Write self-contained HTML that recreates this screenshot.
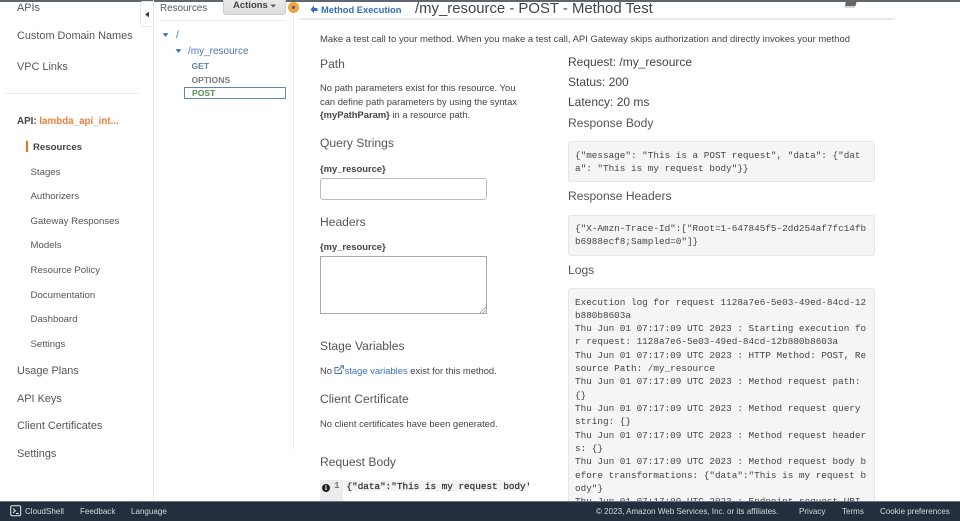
<!DOCTYPE html>
<html><head><meta charset="utf-8">
<style>
html,body{margin:0;padding:0;background:#fff}
body{width:960px;height:521px;overflow:hidden;position:relative;font-family:"Liberation Sans",sans-serif;color:#444}
.w{position:absolute;left:0;top:0;width:960px;height:521px;overflow:hidden;filter:blur(.35px)}
.t{position:absolute;white-space:nowrap;line-height:14px}
.n{font-size:10.9px;color:#555}
.m{font-size:9.65px;color:#555;left:30.5px}
.h{font-size:12.1px;color:#555;left:320px}
.p{font-size:9.4px;color:#444;left:320px}
.b{position:absolute;background:#e9e9e9}
.pre{position:absolute;left:568px;width:307px;background:#f5f5f5;border:1px solid #e6e6e6;border-radius:3px;box-sizing:border-box}
.mono{position:absolute;left:575px;font:9.33px/13.33px "Liberation Mono",monospace;color:#444;white-space:pre}
.f{position:absolute;font-size:8.05px;color:#d5dbdb;white-space:nowrap;line-height:12px;top:505.5px}
</style></head><body>
<div class="w">
<div style="position:absolute;left:0;top:0;width:960px;height:1.5px;background:#5f6670"></div>

<div class="t n" style="left:17px;top:1px">APIs</div>
<div class="t n" style="left:17px;top:28.5px">Custom Domain Names</div>
<div class="t n" style="left:17px;top:59.5px">VPC Links</div>
<div class="b" style="left:5px;top:92.5px;width:134px;height:1.5px"></div>
<div class="t" style="left:17px;top:114.5px;font-size:9.8px;font-weight:bold;color:#444">API: <span style="color:#e9823a">lambda_api_int...</span></div>
<div style="position:absolute;left:25.5px;top:141px;width:2px;height:11px;background:#ec7211"></div>
<div class="t" style="left:33px;top:140.5px;font-size:9.6px;font-weight:bold;color:#444">Resources</div>
<div class="t m" style="top:165.5px">Stages</div>
<div class="t m" style="top:190px">Authorizers</div>
<div class="t m" style="top:214.5px">Gateway Responses</div>
<div class="t m" style="top:239px">Models</div>
<div class="t m" style="top:263.5px">Resource Policy</div>
<div class="t m" style="top:288.5px">Documentation</div>
<div class="t m" style="top:313px">Dashboard</div>
<div class="t m" style="top:337.5px">Settings</div>
<div class="t n" style="left:17px;top:364px">Usage Plans</div>
<div class="t n" style="left:17px;top:391.5px">API Keys</div>
<div class="t n" style="left:17px;top:419px">Client Certificates</div>
<div class="t n" style="left:17px;top:447px">Settings</div>

<div class="b" style="left:152.5px;top:0;width:1.5px;height:501px"></div>
<div style="position:absolute;left:140px;top:1px;width:13px;height:26px;background:#fff;border:1px solid #e6e6e6;border-right:0;border-radius:3px 0 0 3px;box-sizing:border-box"></div>
<svg style="position:absolute;left:144px;top:11px" width="6" height="7"><path d="M1 3.5L5 .5V6.5Z" fill="#444"/></svg>
<div class="t" style="left:160px;top:1.5px;font-size:9.9px;color:#555">Resources</div>
<div style="position:absolute;left:223px;top:-6px;width:63px;height:21px;background:linear-gradient(#eee,#ddd);border:1px solid #ccc;border-radius:3px;box-sizing:border-box"></div>
<div class="t" style="left:233px;top:-1.5px;font-size:9.5px;font-weight:bold;color:#444">Actions</div>
<svg style="position:absolute;left:270px;top:4px" width="7" height="4"><path d="M.5 .5H6L3.2 3.5Z" fill="#555"/></svg>
<div class="b" style="left:160px;top:20px;width:126px;height:1px"></div>
<div class="b" style="left:292.5px;top:12px;width:1.5px;height:437px"></div>
<div style="position:absolute;left:287.5px;top:1.5px;width:11px;height:11px;border-radius:50%;background:#f2a33a"></div>
<div style="position:absolute;left:291.5px;top:5.5px;width:3.5px;height:3.5px;border-radius:50%;background:#2f5fa8"></div>

<svg style="position:absolute;left:162px;top:33px" width="7" height="4"><path d="M.5 .3H6.5L3.5 3.7Z" fill="#2f6fb5"/></svg>
<div class="t" style="left:176px;top:28.5px;font-size:10px;color:#4a76ad">/</div>
<svg style="position:absolute;left:175px;top:49px" width="7" height="4"><path d="M.5 .3H6.5L3.5 3.7Z" fill="#2f6fb5"/></svg>
<div class="t" style="left:188px;top:44.5px;font-size:10px;color:#4a76ad">/my_resource</div>
<div class="t" style="left:191.5px;top:58.5px;font-size:8.6px;font-weight:bold;color:#5a83b8">GET</div>
<div class="t" style="left:191.5px;top:72.5px;font-size:8.6px;font-weight:bold;color:#7b7b7b">OPTIONS</div>
<div style="position:absolute;left:184px;top:87px;width:102px;height:12px;border:1.5px solid #5d86b0;box-sizing:border-box"></div>
<div class="t" style="left:192px;top:86px;font-size:8.6px;font-weight:bold;color:#4f9056">POST</div>

<svg style="position:absolute;left:310px;top:5px" width="8" height="9"><path d="M4 .5L.5 4.5 4 8.5V6H7.5V3H4Z" fill="#2f6fb5"/></svg>
<div class="t" style="left:321px;top:2.5px;font-size:9.35px;font-weight:bold;color:#2f6fb5">Method Execution</div>
<div class="t" style="left:415px;top:2px;font-size:14.9px;color:#444">/my_resource - POST - Method Test</div>
<svg style="position:absolute;left:843px;top:0" width="15" height="8"><path d="M3 0H14L12.5 6H2Z" fill="#666"/><path d="M1.5 7H12" stroke="#aaa"/></svg>
<div class="b" style="left:300px;top:18px;width:595px;height:2px"></div>

<div class="t" style="left:320px;top:33px;font-size:9.47px;color:#444">Make a test call to your method. When you make a test call, API Gateway skips authorization and directly invokes your method</div>

<div class="t h" style="top:56.5px">Path</div>
<div class="t p" style="top:81px">No path parameters exist for this resource. You</div>
<div class="t p" style="top:94.5px">can define path parameters by using the syntax</div>
<div class="t p" style="top:108px"><b>{myPathParam}</b> in a resource path.</div>
<div class="t h" style="top:136px">Query Strings</div>
<div class="t p" style="top:161.5px"><b>{my_resource}</b></div>
<div style="position:absolute;left:320px;top:178px;width:167px;height:22px;border:1px solid #bbb;border-radius:3px;box-sizing:border-box;background:#fff"></div>
<div class="t h" style="top:214.5px">Headers</div>
<div class="t p" style="top:239.5px"><b>{my_resource}</b></div>
<div style="position:absolute;left:320px;top:256px;width:167px;height:58px;border:1px solid #aaa;box-sizing:border-box;background:#fff"></div>
<svg style="position:absolute;left:480px;top:307px" width="6" height="6"><path d="M0 6L6 0M3 6L6 3" stroke="#888" stroke-width=".7"/></svg>
<div class="t h" style="top:339px">Stage Variables</div>
<div class="t p" style="top:364px">No <span style="display:inline-block;width:10px"></span><span style="color:#3b73b9">stage variables</span> exist for this method.</div>
<svg style="position:absolute;left:334px;top:365px" width="11" height="10" fill="none" stroke="#3b73b9" stroke-width=".9"><path d="M7.5 5.5V8.5H1V2.5H4.5"/><path d="M3.5 6L9 1M6 .8H9.5V4"/></svg>
<div class="t h" style="top:392px">Client Certificate</div>
<div class="t p" style="top:417px">No client certificates have been generated.</div>
<div class="t h" style="top:455px">Request Body</div>
<div style="position:absolute;left:320px;top:480px;width:23px;height:21px;background:#ececec"></div>
<div style="position:absolute;left:343px;top:480px;width:185px;height:11px;background:#f3f3f3"></div>
<div style="position:absolute;left:322px;top:483.5px;width:8px;height:8px;border-radius:50%;background:#222;color:#fff;font:bold 7px/8px 'Liberation Serif',serif;text-align:center">i</div>
<div class="t" style="left:334px;top:479px;font:9.33px/14px 'Liberation Mono',monospace;color:#444">1</div>
<div class="t" style="left:346.5px;top:480px;font:9.33px/14px 'Liberation Mono',monospace;color:#333;-webkit-text-stroke:.25px #333;width:182px;overflow:hidden">{"data":"This is my request body'</div>

<div class="t" style="left:568px;top:55px;font-size:12px;color:#444">Request: /my_resource</div>
<div class="t" style="left:568px;top:75px;font-size:12px;color:#444">Status: 200</div>
<div class="t" style="left:568px;top:95px;font-size:12px;color:#444">Latency: 20 ms</div>
<div class="t" style="left:568px;top:116px;font-size:12.1px;color:#555">Response Body</div>
<div class="pre" style="top:141px;height:41px"></div>
<div class="mono" style="top:149px">{"message": "This is a POST request", "data": {"dat
a": "This is my request body"}}</div>
<div class="t" style="left:568px;top:189px;font-size:12.1px;color:#555">Response Headers</div>
<div class="pre" style="top:215px;height:41px"></div>
<div class="mono" style="top:222px">{"X-Amzn-Trace-Id":["Root=1-647845f5-2dd254af7fc14fb
b6988ecf8;Sampled=0"]}</div>
<div class="t" style="left:568px;top:263px;font-size:12.1px;color:#555">Logs</div>
<div class="pre" style="top:288px;height:240px"></div>
<div class="mono" style="top:295.5px">Execution log for request 1128a7e6-5e03-49ed-84cd-12
b880b8603a
Thu Jun 01 07:17:09 UTC 2023 : Starting execution fo
r request: 1128a7e6-5e03-49ed-84cd-12b880b8603a
Thu Jun 01 07:17:09 UTC 2023 : HTTP Method: POST, Re
source Path: /my_resource
Thu Jun 01 07:17:09 UTC 2023 : Method request path:
{}
Thu Jun 01 07:17:09 UTC 2023 : Method request query
string: {}
Thu Jun 01 07:17:09 UTC 2023 : Method request header
s: {}
Thu Jun 01 07:17:09 UTC 2023 : Method request body b
efore transformations: {"data":"This is my request b
ody"}
Thu Jun 01 07:17:09 UTC 2023 : Endpoint request URI</div>

<div style="position:absolute;left:0;top:500.5px;width:960px;height:20.5px;background:#232f3e;border-top:1px solid #6b7480;box-sizing:border-box"></div>
<svg style="position:absolute;left:10px;top:505px" width="12" height="12" fill="none" stroke="#e8ecee"><rect x=".7" y=".7" width="10" height="10" rx="1.5"/><path d="M3 3.5L5.3 5.7 3 8M6 8.5H8.8"/></svg>
<div class="f" style="left:25px">CloudShell</div>
<div class="f" style="left:80px">Feedback</div>
<div class="f" style="left:131px">Language</div>
<div class="f" style="left:596px">© 2023, Amazon Web Services, Inc. or its affiliates.</div>
<div class="f" style="left:799px">Privacy</div>
<div class="f" style="left:842px">Terms</div>
<div class="f" style="left:880px">Cookie preferences</div>
</div>
</body></html>
